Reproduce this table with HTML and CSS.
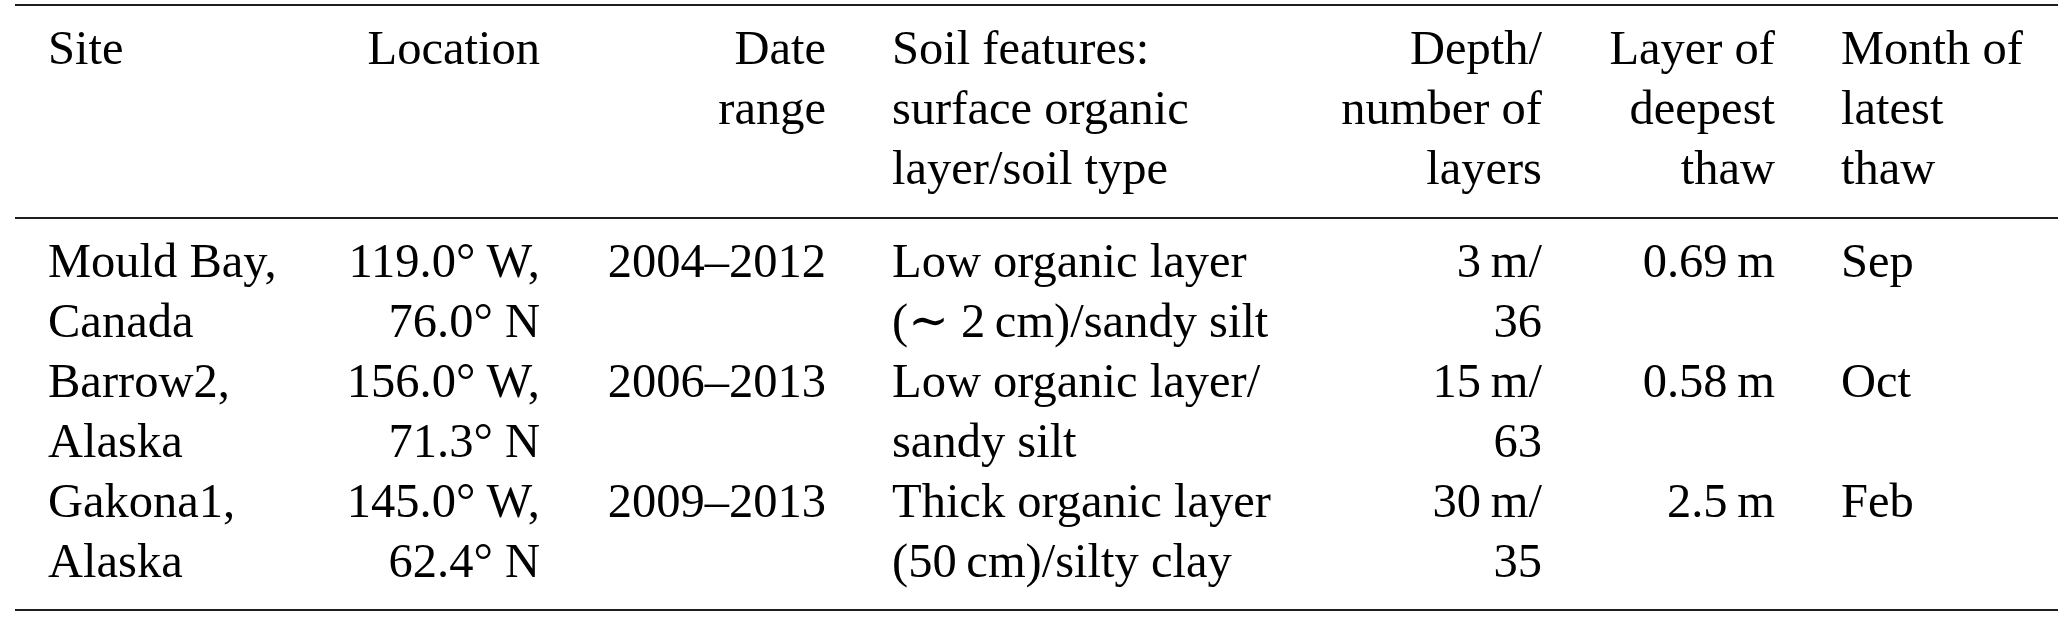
FILE: index.html
```html
<!DOCTYPE html>
<html>
<head>
<meta charset="utf-8">
<link rel="stylesheet" href="styles.css">
</head>
<body>
<table class="tbl">
  <colgroup>
    <col class="c-site">
    <col class="c-loc">
    <col class="c-date">
    <col class="c-soil">
    <col class="c-depth">
    <col class="c-layer">
    <col class="c-month">
  </colgroup>
  <thead>
    <tr>
      <th class="l">Site</th>
      <th class="r">Location</th>
      <th class="r">Date<br>range</th>
      <th class="l">Soil features:<br>surface organic<br>layer/soil type</th>
      <th class="r">Depth/<br>number of<br>layers</th>
      <th class="r">Layer of<br>deepest<br>thaw</th>
      <th class="l">Month of<br>latest<br>thaw</th>
    </tr>
  </thead>
  <tbody>
    <tr class="first">
      <td class="l">Mould Bay,<br>Canada</td>
      <td class="r">119.0° W,<br>76.0° N</td>
      <td class="r">2004–2012</td>
      <td class="l">Low organic layer<br>(∼ 2&thinsp;cm)/sandy silt</td>
      <td class="r">3&thinsp;m/<br>36</td>
      <td class="r">0.69&thinsp;m</td>
      <td class="l">Sep</td>
    </tr>
    <tr>
      <td class="l">Barrow2,<br>Alaska</td>
      <td class="r">156.0° W,<br>71.3° N</td>
      <td class="r">2006–2013</td>
      <td class="l">Low organic layer/<br>sandy silt</td>
      <td class="r">15&thinsp;m/<br>63</td>
      <td class="r">0.58&thinsp;m</td>
      <td class="l">Oct</td>
    </tr>
    <tr class="last">
      <td class="l">Gakona1,<br>Alaska</td>
      <td class="r">145.0° W,<br>62.4° N</td>
      <td class="r">2009–2013</td>
      <td class="l">Thick organic layer<br>(50&thinsp;cm)/silty clay</td>
      <td class="r">30&thinsp;m/<br>35</td>
      <td class="r">2.5&thinsp;m</td>
      <td class="l">Feb</td>
    </tr>
  </tbody>
</table>
</body>
</html>
```

FILE: styles.css
```css
html, body {
  margin: 0;
  padding: 0;
  background: #ffffff;
}

body {
  font-family: "Liberation Serif", "Times New Roman", "DejaVu Serif", serif;
  font-size: 48.5px;
  line-height: 60px;
  color: #000000;
}

.tbl {
  margin: 4px 0 0 15px;
  width: 2043px;
  table-layout: fixed;
  border-collapse: collapse;
  border-spacing: 0;
}

.c-site { width: 297px; }
.c-loc { width: 261px; }
.c-date { width: 286px; }
.c-soil { width: 447px; }
.c-depth { width: 269px; }
.c-layer { width: 233px; }
.c-month { width: 250px; }

.tbl th,
.tbl td {
  padding: 0 33px;
  white-space: nowrap;
  vertical-align: top;
  font-weight: normal;
}

.tbl .l { text-align: left; }
.tbl .r { text-align: right; }

.tbl thead th {
  border-top: 2px solid #1e1e1e;
  border-bottom: 2px solid #1e1e1e;
  padding-top: 12px;
  padding-bottom: 19px;
}

.tbl tbody tr.first td {
  padding-top: 12px;
}

.tbl tbody tr.last td {
  padding-bottom: 18px;
  border-bottom: 2px solid #1e1e1e;
}
```
